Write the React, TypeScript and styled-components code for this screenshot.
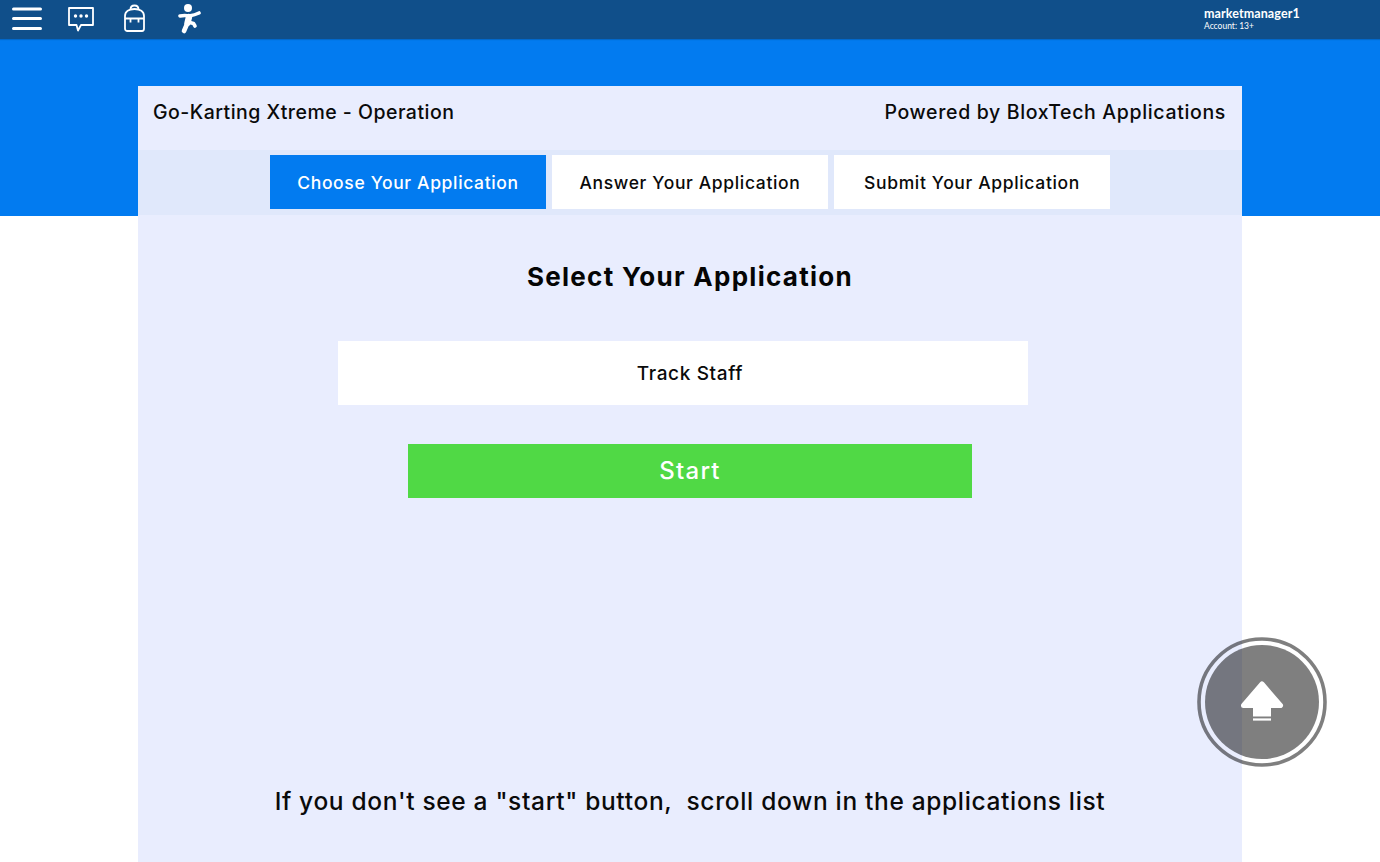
import React from 'react'
import styled, { createGlobalStyle } from 'styled-components'

const GlobalStyle = createGlobalStyle`
  html, body {
    margin: 0;
    padding: 0;
    height: 862px;
    overflow: hidden;
    background: #fff;
    font-family: Inter, "Open Sans", "Liberation Sans", sans-serif;
  }
`

const Page = styled.div`
  height: 862px;
  position: relative;
  overflow: hidden;
  background: linear-gradient(#027bf0 216px, #fff 216px);
`

const TopBar = styled.header`
  height: 39px;
  background: #104f8a;
  display: flex;
  align-items: center;
  padding-left: 11px;
  box-shadow: 0 1px 1px rgba(0, 0, 0, 0.15);
`

const IconSlot = styled.div<{ $width: number; $gap: number }>`
  width: ${p => p.$width}px;
  height: 39px;
  margin-right: ${p => p.$gap}px;
  color: #fff;
  svg { display: block; }
`

const UserBox = styled.div`
  margin-left: auto;
  width: 176px;
  margin-top: -2px;
  color: #fff;
  font-family: Lato, "Open Sans", sans-serif;
`

const UserName = styled.div`
  font-size: 12.5px;
  font-weight: 700;
  line-height: 14px;
  letter-spacing: 0.1px;
`

const UserAge = styled.div`
  font-size: 8.5px;
  line-height: 10px;
`

const Card = styled.main`
  width: 1104px;
  height: 776px;
  margin: 47px auto 0;
  background: #e9edfe;
`

const TitleRow = styled.div`
  height: 64px;
  display: flex;
  justify-content: space-between;
  align-items: flex-start;
  padding: 14px 16px 0 15px;
  box-sizing: border-box;
  font-size: 19.5px;
  line-height: 24px;
  font-weight: 500;
  color: #0a0a0a;
`

const TitleText = styled.span<{ $spacing: number }>`
  letter-spacing: ${p => p.$spacing}px;
`

const TabStrip = styled.nav`
  height: 65px;
  background: #e0e8fb;
  display: flex;
  justify-content: center;
  gap: 6px;
  padding-top: 5px;
  box-sizing: border-box;
`

const Tab = styled.div<{ $active?: boolean }>`
  width: 276px;
  height: 54px;
  display: flex;
  align-items: center;
  justify-content: center;
  background: ${p => (p.$active ? '#027bf0' : '#fff')};
  color: ${p => (p.$active ? '#fff' : '#0a0a0a')};
  font-size: 17.5px;
  font-weight: 500;
  letter-spacing: 0.65px;
`

const Body = styled.section`
  display: flex;
  flex-direction: column;
  align-items: center;
`

const Heading = styled.h1`
  margin: 45px 0 0;
  font-size: 26px;
  line-height: 34px;
  font-weight: 700;
  color: #050505;
  letter-spacing: 1.28px;
`

const SelectBox = styled.div`
  width: 690px;
  height: 64px;
  margin: 47px 14px 0 0;
  background: #fff;
  display: flex;
  align-items: center;
  justify-content: center;
  padding-left: 14px;
  box-sizing: border-box;
  font-size: 19px;
  font-weight: 500;
  letter-spacing: 0.65px;
  color: #0a0a0a;
`

const StartButton = styled.button`
  width: 564px;
  height: 54px;
  margin-top: 39px;
  border: none;
  padding: 0 0 2px;
  background: #50d945;
  color: #fff;
  font-family: inherit;
  font-size: 24px;
  font-weight: 500;
  letter-spacing: 1.2px;
`

const Hint = styled.p`
  margin: 288px 0 0;
  font-size: 24.5px;
  line-height: 30px;
  font-weight: 500;
  letter-spacing: 0.66px;
  color: #0a0a0a;
  white-space: pre;
`

const ScrollTop = styled.button`
  position: absolute;
  left: 1197px;
  top: 637px;
  width: 130px;
  height: 130px;
  padding: 0;
  border: none;
  background: none;
  svg { display: block; }
`

const App = () => (
  <Page>
    <GlobalStyle />
    <TopBar>
      <IconSlot $width={32} $gap={25}>
        <svg width="32" height="39" viewBox="0 0 32 39" fill="none" stroke="currentColor" strokeWidth="3" strokeLinecap="round">
          <path d="M2.5 9H29.5M2.5 18.5H29.5M2.5 28.5H29.5" />
        </svg>
      </IconSlot>
      <IconSlot $width={28} $gap={28}>
        <svg width="28" height="39" viewBox="0 0 28 39" fill="none">
          <path d="M1 8H25V25H13L10 30.5L8.5 25H1Z" stroke="currentColor" strokeWidth="1.8" strokeLinejoin="round" />
          <circle cx="7.5" cy="16" r="1.7" fill="currentColor" />
          <circle cx="13" cy="16" r="1.7" fill="currentColor" />
          <circle cx="18.5" cy="16" r="1.7" fill="currentColor" />
        </svg>
      </IconSlot>
      <IconSlot $width={22} $gap={32}>
        <svg width="22" height="39" viewBox="0 0 22 39" fill="none" stroke="currentColor" strokeWidth="1.8" strokeLinejoin="round">
          <path d="M6.5 9.5C6.5 6.5 8 5.5 10.5 5.5S14.5 6.5 14.5 9.5" />
          <path d="M1 16C1 11.5 5 9 10.5 9S20 11.5 20 16V28.5C20 30 19.3 31 18 31H3C1.7 31 1 30 1 28.5Z" />
          <path d="M1 18.5H20M6.5 18.5V22.5M14.5 18.5V22.5" />
        </svg>
      </IconSlot>
      <IconSlot $width={24} $gap={0}>
        <svg width="24" height="39" viewBox="0 0 24 39" fill="none" stroke="currentColor" strokeLinecap="round" strokeLinejoin="round">
          <circle cx="10" cy="8" r="4" fill="currentColor" stroke="none" />
          <path d="M2 16Q7 15 11 16Q17 15 21 13" strokeWidth="3.6" />
          <path d="M11 17L9.5 23" strokeWidth="6.4" />
          <path d="M9 24L6 31" strokeWidth="4.6" />
          <path d="M10 22L15.5 23.5L17 26" strokeWidth="3.6" />
        </svg>
      </IconSlot>
      <UserBox>
        <UserName>marketmanager1</UserName>
        <UserAge>Account: 13+</UserAge>
      </UserBox>
    </TopBar>
    <Card>
      <TitleRow>
        <TitleText $spacing={0.48}>Go-Karting Xtreme - Operation</TitleText>
        <TitleText $spacing={0.65}>Powered by BloxTech Applications</TitleText>
      </TitleRow>
      <TabStrip>
        <Tab $active>Choose Your Application</Tab>
        <Tab>Answer Your Application</Tab>
        <Tab>Submit Your Application</Tab>
      </TabStrip>
      <Body>
        <Heading>Select Your Application</Heading>
        <SelectBox>Track Staff</SelectBox>
        <StartButton>Start</StartButton>
        <Hint>{'If you don\'t see a "start" button,  scroll down in the applications list'}</Hint>
      </Body>
    </Card>
    <ScrollTop aria-label="Scroll to top">
      <svg width="130" height="130" viewBox="0 0 130 130">
        <circle cx="65" cy="65" r="63" fill="none" stroke="#000" strokeOpacity="0.5" strokeWidth="3.6" />
        <circle cx="65" cy="65" r="57" fill="#000" fillOpacity="0.5" />
        <path d="M65 47L83.5 68.5H46.5Z" fill="#fff" stroke="#fff" strokeWidth="5" strokeLinejoin="round" />
        <path d="M56 70H74V79.5H56Z" fill="#fff" />
        <path d="M56 82.5H74" stroke="#fff" strokeWidth="2.2" />
      </svg>
    </ScrollTop>
  </Page>
)

export default App
